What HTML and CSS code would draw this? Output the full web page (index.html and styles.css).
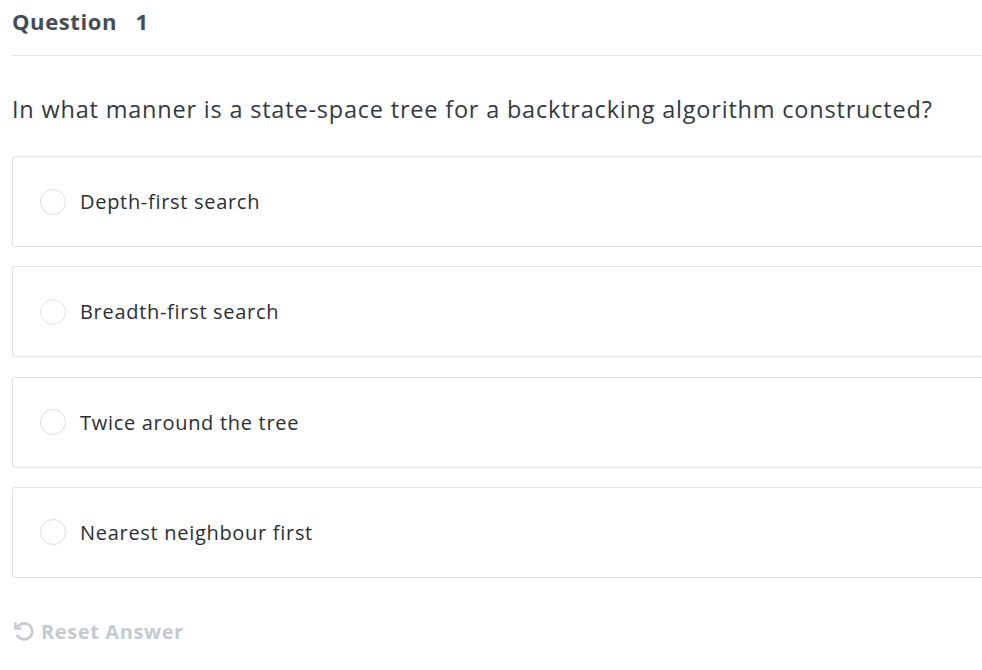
FILE: index.html
```html
<!DOCTYPE html>
<html lang="en">
<head>
  <meta charset="UTF-8">
  <title>Question 1</title>
  <link rel="stylesheet" href="styles.css">
</head>
<body>
  <div class="quiz">
    <div class="quiz-header">
      <h2>Question <span class="num">1</span></h2>
    </div>

    <p class="question">In what manner is a state-space tree for a backtracking algorithm constructed?</p>

    <div class="options">
      <label class="option"><span class="radio"></span>Depth-first search</label>
      <label class="option"><span class="radio"></span>Breadth-first search</label>
      <label class="option"><span class="radio"></span>Twice around the tree</label>
      <label class="option"><span class="radio"></span>Nearest neighbour first</label>
    </div>

    <div class="reset">
      <svg width="24" height="24" viewBox="0 0 24 24" fill="none" stroke="#c5cad1" stroke-width="2.6" stroke-linecap="round" stroke-linejoin="round">
        <path d="M6.2 7.2 A8 8 0 1 1 5.4 16.5"/>
        <path d="M3.5 4.5 V9.5 H8.5"/>
      </svg>
      Reset Answer
    </div>
  </div>
</body>
</html>
```

FILE: styles.css
```css
body {
  margin: 0;
  padding: 0;
  font-family: "Open Sans", Arial, sans-serif;
  background-color: #fff;
  overflow: hidden;
}

.quiz {
  width: 1000px;
  padding-left: 12px;
}

.quiz-header {
  height: 56px;
  border-bottom: 1px solid #e6e6e6;
  box-sizing: border-box;
}

.quiz-header h2 {
  margin: 0;
  padding-top: 6px;
  font-size: 22px;
  font-weight: 700;
  color: #454c55;
  letter-spacing: 0.6px;
}

.quiz-header .num {
  margin-left: 12px;
}

.question {
  margin: 37px 0 31px;
  font-size: 23.5px;
  color: #333a42;
  line-height: 32px;
  letter-spacing: 0.8px;
}

.options {
  display: flex;
  flex-direction: column;
  gap: 19.3px;
}

.option {
  display: flex;
  align-items: center;
  height: 91px;
  box-sizing: border-box;
  border: 1px solid #dde1e6;
  border-radius: 3px;
  padding-left: 27px;
  font-size: 20px;
  color: #2b2f33;
  letter-spacing: 0.7px;
}

.radio {
  width: 26px;
  height: 26px;
  border: 1px solid #dde1e6;
  border-radius: 50%;
  box-sizing: border-box;
  margin-right: 14px;
}

.reset {
  display: flex;
  align-items: center;
  gap: 5px;
  margin-top: 40px;
  font-size: 20px;
  font-weight: 700;
  color: #c5cad1;
  letter-spacing: 0.6px;
}
```
